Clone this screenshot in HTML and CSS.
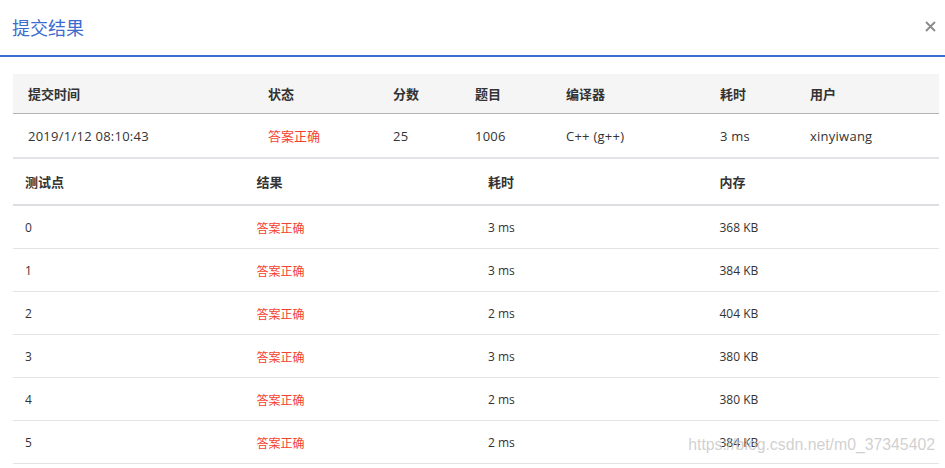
FILE: index.html
```html
<!DOCTYPE html>
<html lang="zh-CN">
<head>
<meta charset="utf-8">
<title>提交结果</title>
<link rel="stylesheet" href="styles.css">
</head>
<body>
<div class="modal">
  <div class="modal-head">
    <h1 class="modal-title">提交结果</h1>
    <button class="close" aria-label="关闭">
      <svg width="11" height="11" viewBox="0 0 11 11"><path d="M1 1L10 10M10 1L1 10" stroke="#8a8a8a" stroke-width="1.8" fill="none"/></svg>
    </button>
  </div>
  <div class="modal-body">
    <table class="summary">
      <colgroup>
        <col style="width:240px"><col style="width:125px"><col style="width:82px"><col style="width:91px"><col style="width:154px"><col style="width:90px"><col>
      </colgroup>
      <thead>
        <tr><th>提交时间</th><th>状态</th><th>分数</th><th>题目</th><th>编译器</th><th>耗时</th><th>用户</th></tr>
      </thead>
      <tbody>
        <tr><td>2019/1/12 08:10:43</td><td class="ok">答案正确</td><td>25</td><td>1006</td><td>C++ (g++)</td><td>3 ms</td><td>xinyiwang</td></tr>
      </tbody>
    </table>
    <table class="cases">
      <thead>
        <tr><th>测试点</th><th>结果</th><th>耗时</th><th>内存</th></tr>
      </thead>
      <tbody>
        <tr><td>0</td><td class="ok">答案正确</td><td>3 ms</td><td>368 KB</td></tr>
        <tr><td>1</td><td class="ok">答案正确</td><td>3 ms</td><td>384 KB</td></tr>
        <tr><td>2</td><td class="ok">答案正确</td><td>2 ms</td><td>404 KB</td></tr>
        <tr><td>3</td><td class="ok">答案正确</td><td>3 ms</td><td>380 KB</td></tr>
        <tr><td>4</td><td class="ok">答案正确</td><td>2 ms</td><td>380 KB</td></tr>
        <tr><td>5</td><td class="ok">答案正确</td><td>2 ms</td><td>384 KB</td></tr>
      </tbody>
    </table>
  </div>
  <div class="watermark">https://blog.csdn.net/m0_37345402</div>
</div>
</body>
</html>
```
FILE: styles.css
```css
html, body {
  margin: 0;
  padding: 0;
  background: #fff;
  overflow: hidden;
}
body {
  font-family: "Open Sans", "Noto Sans CJK SC", sans-serif;
  color: #333;
}
.modal {
  position: relative;
  width: 945px;
  height: 468px;
  overflow: hidden;
}
.modal-head {
  display: flex;
  align-items: center;
  justify-content: space-between;
  height: 55px;
  padding: 0 9px 0 12px;
  border-bottom: 2px solid #3b6ccf;
}
.modal-title {
  margin: 0;
  font-family: "Noto Sans CJK SC", sans-serif;
  font-weight: 400;
  font-size: 18px;
  line-height: 24px;
  color: #3b6ccf;
  position: relative;
  top: -1px;
}
.close {
  border: 0;
  background: none;
  padding: 0;
  width: 11px;
  height: 11px;
  display: block;
  position: relative;
  top: -1px;
}
.close svg { display: block; }
.modal-body {
  padding: 17px 6px 0 13px;
}
table {
  width: 926px;
  border-collapse: collapse;
  table-layout: fixed;
}
th {
  font-family: "Noto Sans CJK SC", sans-serif;
  font-weight: 700;
  font-size: 13px;
  text-align: left;
  color: #333;
}
td {
  font-size: 13px;
  color: #333;
  white-space: nowrap;
}
.ok {
  color: #f5412f;
  font-family: "Noto Sans CJK SC", sans-serif;
}
.summary thead tr {
  background: #f5f5f5;
  border-bottom: 1px solid #b4b4b4;
}
.summary th {
  height: 39px;
  padding: 0 0 0 15px;
}
.summary td {
  height: 43px;
  padding: 0 0 0 15px;
  letter-spacing: 0.25px;
}
.summary td.ok { letter-spacing: 0; }
.summary tbody tr {
  border-bottom: 2px solid #e2e3e6;
}
.cases th {
  height: 45px;
  padding: 0 0 0 12px;
}
.cases thead tr {
  border-bottom: 2px solid #dcdee2;
}
.cases td {
  height: 42px;
  padding: 0 0 0 12px;
  font-size: 12px;
}
.cases tbody tr {
  border-bottom: 1px solid #e2e3e6;
}
.watermark {
  position: absolute;
  right: 10px;
  bottom: 14px;
  font-family: "Liberation Sans", Arial, sans-serif;
  font-size: 15.8px;
  color: rgba(200, 200, 200, 0.85);
  pointer-events: none;
}
```
